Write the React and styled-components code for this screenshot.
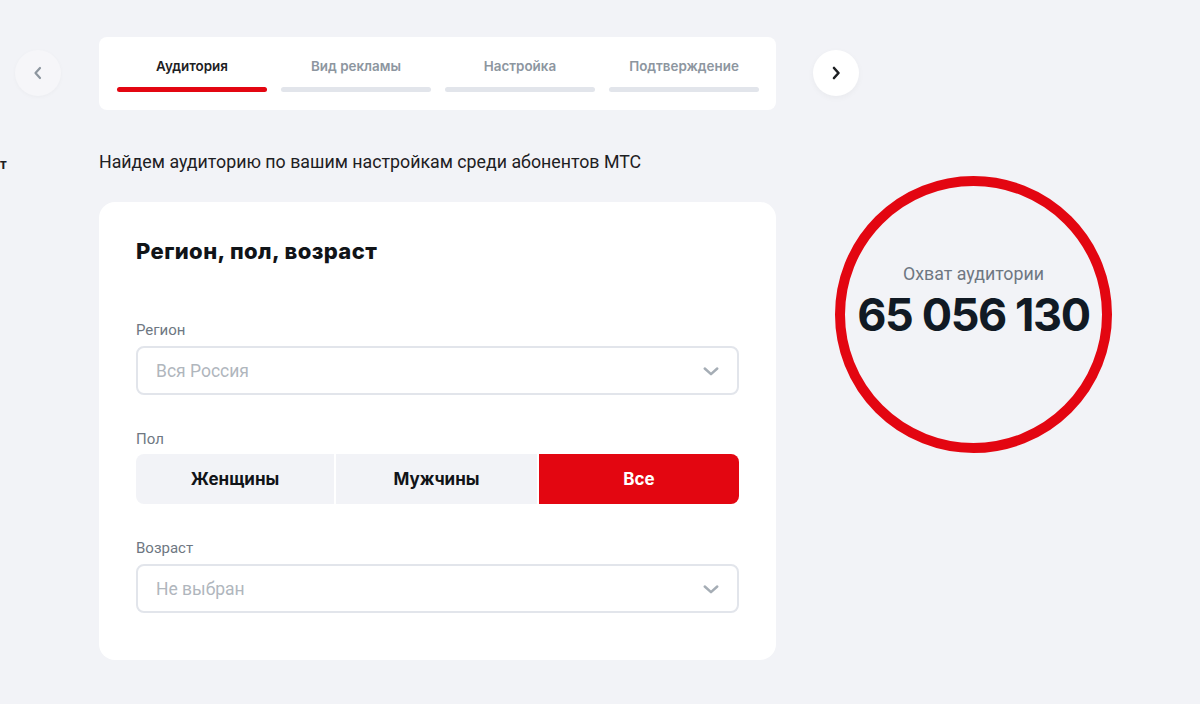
import React, { useState } from "react";
import styled, { createGlobalStyle } from "styled-components";

const GlobalStyle = createGlobalStyle`
  html, body { margin: 0; padding: 0; background: #f2f3f7; }
  body { font-family: Roboto, "Noto Sans", Arial, sans-serif; color: #1d2023; }
  * { box-sizing: border-box; }
`;

const Page = styled.div`
  display: grid;
  grid-template-columns: 99px 677px 1fr;
  padding-top: 37px;
  min-height: 704px;
  overflow: hidden;
`;

const LeftCol = styled.div`
  display: flex;
  flex-direction: column;
  align-items: flex-start;
`;

const RightCol = styled.div`
  display: flex;
  flex-direction: column;
  align-items: flex-start;
`;

const RoundButton = styled.button`
  width: 46px;
  height: 46px;
  border-radius: 50%;
  border: none;
  padding: 0;
  margin-top: 13px;
  margin-left: ${(p) => p.$ml}px;
  display: flex;
  align-items: center;
  justify-content: center;
  background: ${(p) => (p.$muted ? "#f6f6f9" : "#ffffff")};
  box-shadow: ${(p) => (p.$muted ? "0 1px 4px rgba(0,0,0,0.03)" : "0 2px 6px rgba(0,0,0,0.04)")};
  cursor: pointer;
`;

const SidebarStub = styled.div`
  margin-top: 60px;
  font-family: Inter, Roboto, sans-serif;
  font-weight: 700;
  font-size: 13px;
  line-height: 16px;
  color: #1d2023;
`;

const Main = styled.div`
  display: flex;
  flex-direction: column;
`;

const TabsCard = styled.div`
  background: #fff;
  border-radius: 8px;
  padding: 20px 17px 18px 18px;
  display: grid;
  grid-template-columns: repeat(4, 150px);
  column-gap: 14px;
`;

const Tab = styled.div`
  display: flex;
  flex-direction: column;
  align-items: center;
  gap: 12px;
`;

const TabLabel = styled.span`
  font-family: Inter, Roboto, sans-serif;
  font-weight: 600;
  font-size: 13.4px;
  line-height: 18px;
  color: ${(p) => (p.$active ? "#1d2023" : "#8d969f")};
`;

const TabBar = styled.div`
  width: 100%;
  height: 5px;
  border-radius: 3px;
  background: ${(p) => (p.$active ? "#e30611" : "#e2e5eb")};
`;

const Description = styled.p`
  margin: 40px 0 0;
  font-size: 17.8px;
  line-height: 24px;
  color: #1d2023;
`;

const Card = styled.section`
  margin-top: 28px;
  background: #fff;
  border-radius: 16px;
  padding: 35px 37px 47px;
  display: flex;
  flex-direction: column;
`;

const CardTitle = styled.h2`
  margin: 0 0 55px;
  font-family: Inter, Roboto, sans-serif;
  font-weight: 800;
  font-size: 22px;
  line-height: 28px;
  color: #111418;
  letter-spacing: 0.4px;
`;

const Field = styled.div`
  display: flex;
  flex-direction: column;
  margin-bottom: ${(p) => p.$mb || 0}px;
`;

const Label = styled.label`
  font-size: 15px;
  line-height: 20px;
  color: #6e7782;
  margin-bottom: ${(p) => p.$gap}px;
`;

const Select = styled.div`
  height: 49px;
  border: 2px solid #e2e5eb;
  border-radius: 8px;
  display: flex;
  align-items: center;
  justify-content: space-between;
  padding: 0 16px 0 18px;
  font-size: 17.5px;
  color: #b0b6bd;
`;

const Segmented = styled.div`
  display: grid;
  grid-template-columns: 198px 201px 1fr;
  column-gap: 2px;
  height: 50px;
`;

const Segment = styled.button`
  border: none;
  font-family: Inter, Roboto, sans-serif;
  font-weight: 700;
  font-size: 17px;
  color: ${(p) => (p.$active ? "#fff" : "#111418")};
  background: ${(p) => (p.$active ? "#e30611" : "#f2f3f7")};
  cursor: pointer;
  &:first-child { border-radius: 8px 0 0 8px; }
  &:last-child { border-radius: 0 8px 8px 0; }
`;

const Circle = styled.div`
  margin-top: 80px;
  margin-left: 59px;
  width: 277px;
  height: 277px;
  border-radius: 50%;
  border: 10px solid #e30611;
  display: flex;
  flex-direction: column;
  align-items: center;
  padding-top: 77px;
`;

const CircleLabel = styled.div`
  font-size: 17.8px;
  line-height: 22px;
  color: #6e7782;
`;

const CircleValue = styled.div`
  margin-top: 4px;
  font-family: Inter, Roboto, sans-serif;
  font-weight: 700;
  font-size: 45px;
  line-height: 52px;
  letter-spacing: -1.4px;
  color: #111a24;
  white-space: nowrap;
`;

const Chevron = ({ dir = "down", color = "#a5adb5", size = 16, width = 2 }) => {
  const paths = {
    down: "M3 6l5 4.5L13 6",
    left: "M10 3L5.5 8l4.5 5",
    right: "M6 3l4.5 5L6 13",
  };
  return (
    <svg width={size} height={size} viewBox="0 0 16 16" fill="none">
      <path d={paths[dir]} stroke={color} strokeWidth={width} strokeLinecap="round" strokeLinejoin="round" />
    </svg>
  );
};

const tabs = ["Аудитория", "Вид рекламы", "Настройка", "Подтверждение"];
const genders = ["Женщины", "Мужчины", "Все"];

export default function App() {
  const [gender, setGender] = useState(2);
  return (
    <>
      <GlobalStyle />
      <Page>
        <LeftCol>
          <RoundButton $muted $ml={15} aria-label="Назад">
            <Chevron dir="left" color="#8d969f" size={16} width={2.2} />
          </RoundButton>
          <SidebarStub>т</SidebarStub>
        </LeftCol>
        <Main>
          <TabsCard>
            {tabs.map((t, i) => (
              <Tab key={t}>
                <TabLabel $active={i === 0}>{t}</TabLabel>
                <TabBar $active={i === 0} />
              </Tab>
            ))}
          </TabsCard>
          <Description>Найдем аудиторию по вашим настройкам среди абонентов МТС</Description>
          <Card>
            <CardTitle>Регион, пол, возраст</CardTitle>
            <Field $mb={34}>
              <Label $gap={6}>Регион</Label>
              <Select>
                <span>Вся Россия</span>
                <Chevron dir="down" size={20} />
              </Select>
            </Field>
            <Field $mb={34}>
              <Label $gap={5}>Пол</Label>
              <Segmented>
                {genders.map((g, i) => (
                  <Segment key={g} $active={gender === i} onClick={() => setGender(i)}>
                    {g}
                  </Segment>
                ))}
              </Segmented>
            </Field>
            <Field>
              <Label $gap={6}>Возраст</Label>
              <Select>
                <span>Не выбран</span>
                <Chevron dir="down" size={20} />
              </Select>
            </Field>
          </Card>
        </Main>
        <RightCol>
          <RoundButton $ml={37} aria-label="Вперёд">
            <Chevron dir="right" color="#1d2023" size={16} width={2.6} />
          </RoundButton>
          <Circle>
            <CircleLabel>Охват аудитории</CircleLabel>
            <CircleValue>65 056 130</CircleValue>
          </Circle>
        </RightCol>
      </Page>
    </>
  );
}
